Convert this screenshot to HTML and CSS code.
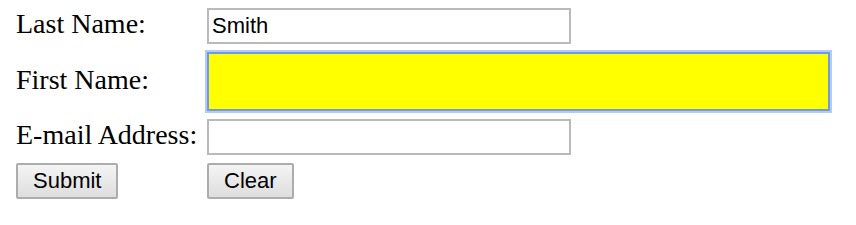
FILE: index.html
```html
<!DOCTYPE html>
<html lang="en">
<head>
    <meta charset="UTF-8">
    <title>Contact Form</title>
    <link rel="stylesheet" href="styles.css">
</head>
<body>
    <form class="entry-form" onsubmit="return false;">
        <label for="lastName">Last Name:</label>
        <input type="text" id="lastName" class="field" value="Smith">

        <label for="firstName">First Name:</label>
        <input type="text" id="firstName" class="field field-focus">

        <label for="email">E-mail Address:</label>
        <input type="text" id="email" class="field">

        <button type="submit" class="btn">Submit</button>
        <button type="reset" class="btn">Clear</button>
    </form>
</body>
</html>
```

FILE: styles.css
```css
body {
    margin: 0;
    background-color: #ffffff;
    font-family: "Liberation Serif", "Times New Roman", serif;
    color: #000000;
}
.entry-form {
    display: grid;
    grid-template-columns: 191px auto;
    row-gap: 8px;
    align-items: center;
    justify-items: start;
    padding: 8px 0 0 16px;
}
.entry-form label {
    font-size: 28px;
    line-height: 32px;
    padding-bottom: 4px;
}
.field {
    box-sizing: border-box;
    width: 364px;
    height: 36px;
    margin: 0;
    padding: 0 3px;
    border: 2px solid #bababa;
    background-color: #ffffff;
    font-family: "Liberation Sans", Arial, sans-serif;
    font-size: 22px;
    color: #000000;
    outline: none;
}
.field-focus {
    width: 623px;
    height: 59px;
    border: 2px solid #6f98e8;
    background-color: #ffff00; /* highlighted field */
    box-shadow: 0 0 0 2px #b3cbf7;
}
.btn {
    box-sizing: border-box;
    height: 36px;
    margin: 0;
    padding: 0 15px;
    border: 2px solid #adadad;
    border-radius: 2px;
    background: linear-gradient(#f4f4f4, #dedede);
    font-family: "Liberation Sans", Arial, sans-serif;
    font-size: 22px;
    color: #000000;
    cursor: pointer;
}
```
